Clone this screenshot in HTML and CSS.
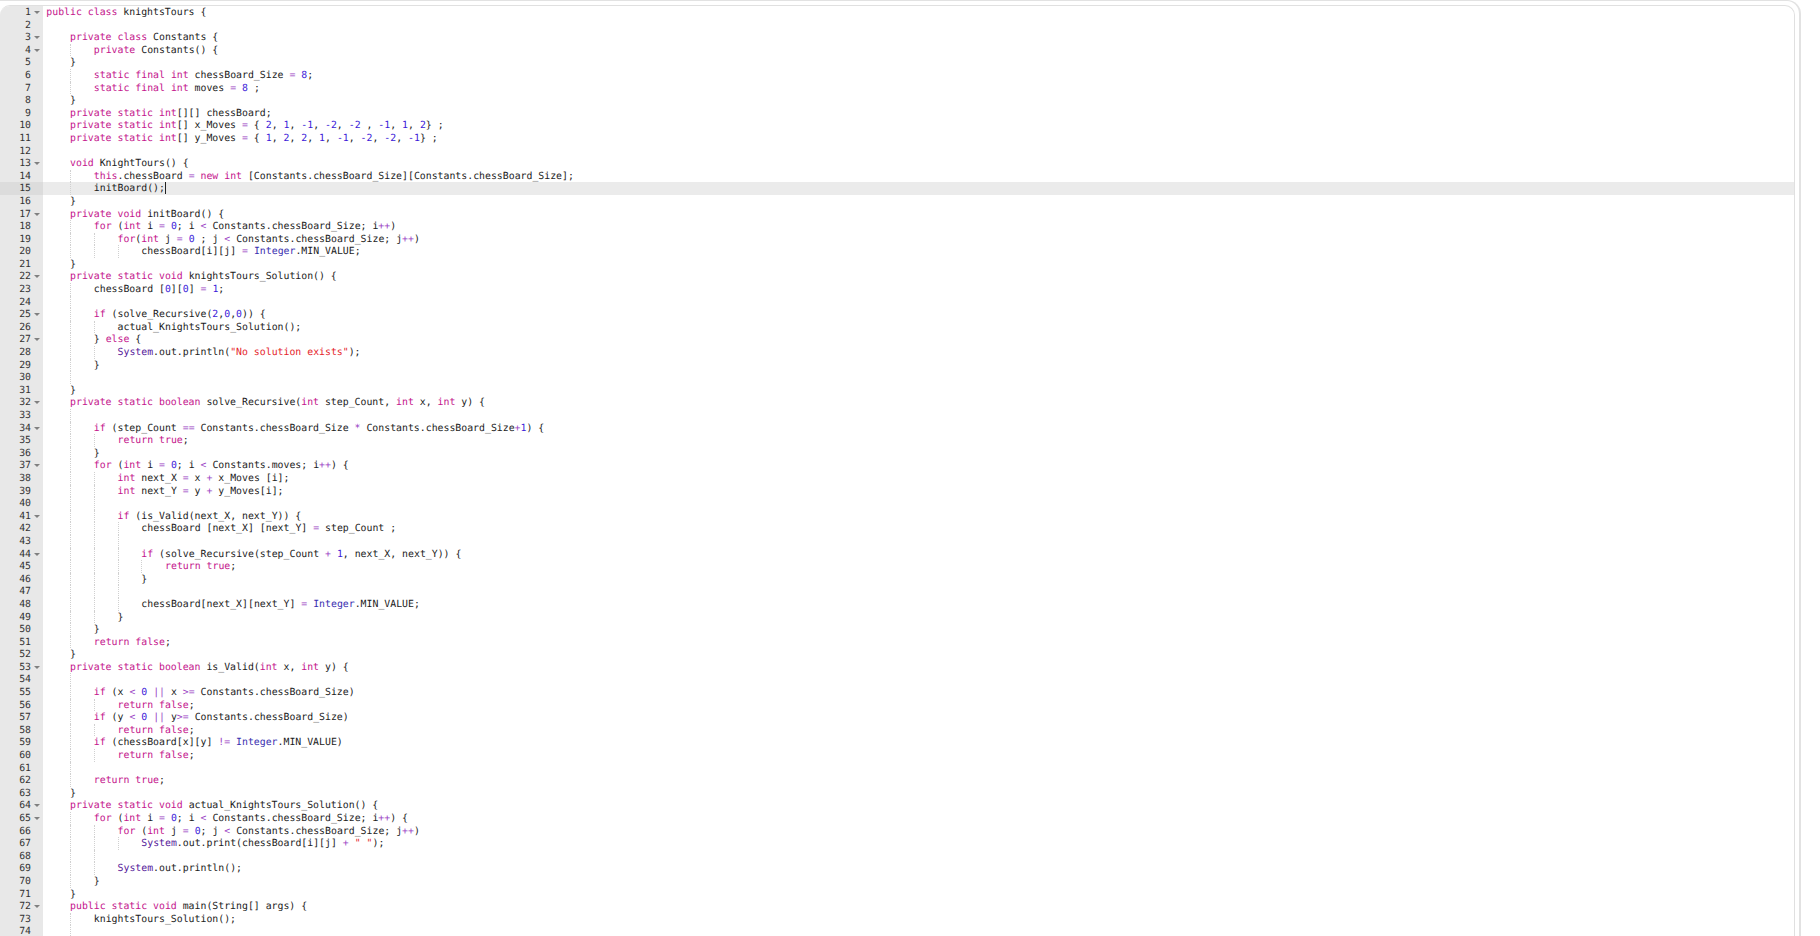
FILE: index.html
```html
<!DOCTYPE html>
<html lang="en">
<head>
<meta charset="utf-8">
<title>knightsTours</title>
<link rel="stylesheet" href="styles.css">
</head>
<body>
<div class="frame">
<div class="editor">
<div class="gutter">
<div class="num fold">1</div>
<div class="num">2</div>
<div class="num fold">3</div>
<div class="num fold">4</div>
<div class="num">5</div>
<div class="num">6</div>
<div class="num">7</div>
<div class="num">8</div>
<div class="num">9</div>
<div class="num">10</div>
<div class="num">11</div>
<div class="num">12</div>
<div class="num fold">13</div>
<div class="num">14</div>
<div class="num on">15</div>
<div class="num">16</div>
<div class="num fold">17</div>
<div class="num">18</div>
<div class="num">19</div>
<div class="num">20</div>
<div class="num">21</div>
<div class="num fold">22</div>
<div class="num">23</div>
<div class="num">24</div>
<div class="num fold">25</div>
<div class="num">26</div>
<div class="num fold">27</div>
<div class="num">28</div>
<div class="num">29</div>
<div class="num">30</div>
<div class="num">31</div>
<div class="num fold">32</div>
<div class="num">33</div>
<div class="num fold">34</div>
<div class="num">35</div>
<div class="num">36</div>
<div class="num fold">37</div>
<div class="num">38</div>
<div class="num">39</div>
<div class="num">40</div>
<div class="num fold">41</div>
<div class="num">42</div>
<div class="num">43</div>
<div class="num fold">44</div>
<div class="num">45</div>
<div class="num">46</div>
<div class="num">47</div>
<div class="num">48</div>
<div class="num">49</div>
<div class="num">50</div>
<div class="num">51</div>
<div class="num">52</div>
<div class="num fold">53</div>
<div class="num">54</div>
<div class="num">55</div>
<div class="num">56</div>
<div class="num">57</div>
<div class="num">58</div>
<div class="num">59</div>
<div class="num">60</div>
<div class="num">61</div>
<div class="num">62</div>
<div class="num">63</div>
<div class="num fold">64</div>
<div class="num fold">65</div>
<div class="num">66</div>
<div class="num">67</div>
<div class="num">68</div>
<div class="num">69</div>
<div class="num">70</div>
<div class="num">71</div>
<div class="num fold">72</div>
<div class="num">73</div>
<div class="num">74</div>
</div>
<div class="code">
<div class="row"><b>public</b> <b>class</b> knightsTours {</div>
<div class="row"></div>
<div class="row"><i class="g0"></i><b>private</b> <b>class</b> Constants {</div>
<div class="row"><i class="g0"></i><i class="g"></i><b>private</b> Constants() {</div>
<div class="row"><i class="g0"></i>}</div>
<div class="row"><i class="g0"></i><i class="g"></i><b>static</b> <b>final</b> <b>int</b> chessBoard_Size <u>=</u> <em>8</em>;</div>
<div class="row"><i class="g0"></i><i class="g"></i><b>static</b> <b>final</b> <b>int</b> moves <u>=</u> <em>8</em> ;</div>
<div class="row"><i class="g0"></i>}</div>
<div class="row"><i class="g0"></i><b>private</b> <b>static</b> <b>int</b>[][] chessBoard;</div>
<div class="row"><i class="g0"></i><b>private</b> <b>static</b> <b>int</b>[] x_Moves <u>=</u> { <em>2</em>, <em>1</em>, <em>-1</em>, <em>-2</em>, <em>-2</em> , <em>-1</em>, <em>1</em>, <em>2</em>} ;</div>
<div class="row"><i class="g0"></i><b>private</b> <b>static</b> <b>int</b>[] y_Moves <u>=</u> { <em>1</em>, <em>2</em>, <em>2</em>, <em>1</em>, <em>-1</em>, <em>-2</em>, <em>-2</em>, <em>-1</em>} ;</div>
<div class="row"></div>
<div class="row"><i class="g0"></i><b>void</b> KnightTours() {</div>
<div class="row"><i class="g0"></i><i class="g"></i><b>this</b>.chessBoard <u>=</u> <b>new</b> <b>int</b> [Constants.chessBoard_Size][Constants.chessBoard_Size];</div>
<div class="row on"><i class="g0"></i><i class="g"></i>initBoard();<span class="caret"></span></div>
<div class="row"><i class="g0"></i>}</div>
<div class="row"><i class="g0"></i><b>private</b> <b>void</b> initBoard() {</div>
<div class="row"><i class="g0"></i><i class="g"></i><b>for</b> (<b>int</b> i <u>=</u> <em>0</em>; i <u>&lt;</u> Constants.chessBoard_Size; i<u>++</u>)</div>
<div class="row"><i class="g0"></i><i class="g"></i><i class="g"></i><b>for</b>(<b>int</b> j <u>=</u> <em>0</em> ; j <u>&lt;</u> Constants.chessBoard_Size; j<u>++</u>)</div>
<div class="row"><i class="g0"></i><i class="g"></i><i class="g"></i><i class="g"></i>chessBoard[i][j] <u>=</u> <span class="type">Integer</span>.MIN_VALUE;</div>
<div class="row"><i class="g0"></i>}</div>
<div class="row"><i class="g0"></i><b>private</b> <b>static</b> <b>void</b> knightsTours_Solution() {</div>
<div class="row"><i class="g0"></i><i class="g"></i>chessBoard [<em>0</em>][<em>0</em>] <u>=</u> <em>1</em>;</div>
<div class="row"><i class="g0"></i><i class="g"></i></div>
<div class="row"><i class="g0"></i><i class="g"></i><b>if</b> (solve_Recursive(<em>2</em>,<em>0</em>,<em>0</em>)) {</div>
<div class="row"><i class="g0"></i><i class="g"></i><i class="g"></i>actual_KnightsTours_Solution();</div>
<div class="row"><i class="g0"></i><i class="g"></i>} <b>else</b> {</div>
<div class="row"><i class="g0"></i><i class="g"></i><i class="g"></i><span class="sys">System</span>.out.println(<span class="str">"No solution exists"</span>);</div>
<div class="row"><i class="g0"></i><i class="g"></i>}</div>
<div class="row"><i class="g0"></i><i class="g"></i></div>
<div class="row"><i class="g0"></i>}</div>
<div class="row"><i class="g0"></i><b>private</b> <b>static</b> <b>boolean</b> solve_Recursive(<b>int</b> step_Count, <b>int</b> x, <b>int</b> y) {</div>
<div class="row"><i class="g0"></i><i class="g"></i></div>
<div class="row"><i class="g0"></i><i class="g"></i><b>if</b> (step_Count <u>==</u> Constants.chessBoard_Size <u>*</u> Constants.chessBoard_Size<u>+</u><em>1</em>) {</div>
<div class="row"><i class="g0"></i><i class="g"></i><i class="g"></i><b>return</b> <b>true</b>;</div>
<div class="row"><i class="g0"></i><i class="g"></i>}</div>
<div class="row"><i class="g0"></i><i class="g"></i><b>for</b> (<b>int</b> i <u>=</u> <em>0</em>; i <u>&lt;</u> Constants.moves; i<u>++</u>) {</div>
<div class="row"><i class="g0"></i><i class="g"></i><i class="g"></i><b>int</b> next_X <u>=</u> x <u>+</u> x_Moves [i];</div>
<div class="row"><i class="g0"></i><i class="g"></i><i class="g"></i><b>int</b> next_Y <u>=</u> y <u>+</u> y_Moves[i];</div>
<div class="row"><i class="g0"></i><i class="g"></i><i class="g"></i></div>
<div class="row"><i class="g0"></i><i class="g"></i><i class="g"></i><b>if</b> (is_Valid(next_X, next_Y)) {</div>
<div class="row"><i class="g0"></i><i class="g"></i><i class="g"></i><i class="g"></i>chessBoard [next_X] [next_Y] <u>=</u> step_Count ;</div>
<div class="row"><i class="g0"></i><i class="g"></i><i class="g"></i><i class="g"></i></div>
<div class="row"><i class="g0"></i><i class="g"></i><i class="g"></i><i class="g"></i><b>if</b> (solve_Recursive(step_Count <u>+</u> <em>1</em>, next_X, next_Y)) {</div>
<div class="row"><i class="g0"></i><i class="g"></i><i class="g"></i><i class="g"></i><i class="g"></i><b>return</b> <b>true</b>;</div>
<div class="row"><i class="g0"></i><i class="g"></i><i class="g"></i><i class="g"></i>}</div>
<div class="row"><i class="g0"></i><i class="g"></i><i class="g"></i><i class="g"></i></div>
<div class="row"><i class="g0"></i><i class="g"></i><i class="g"></i><i class="g"></i>chessBoard[next_X][next_Y] <u>=</u> <span class="type">Integer</span>.MIN_VALUE;</div>
<div class="row"><i class="g0"></i><i class="g"></i><i class="g"></i>}</div>
<div class="row"><i class="g0"></i><i class="g"></i>}</div>
<div class="row"><i class="g0"></i><i class="g"></i><b>return</b> <b>false</b>;</div>
<div class="row"><i class="g0"></i>}</div>
<div class="row"><i class="g0"></i><b>private</b> <b>static</b> <b>boolean</b> is_Valid(<b>int</b> x, <b>int</b> y) {</div>
<div class="row"><i class="g0"></i><i class="g"></i></div>
<div class="row"><i class="g0"></i><i class="g"></i><b>if</b> (x <u>&lt;</u> <em>0</em> <u>||</u> x <u>&gt;=</u> Constants.chessBoard_Size)</div>
<div class="row"><i class="g0"></i><i class="g"></i><i class="g"></i><b>return</b> <b>false</b>;</div>
<div class="row"><i class="g0"></i><i class="g"></i><b>if</b> (y <u>&lt;</u> <em>0</em> <u>||</u> y<u>&gt;=</u> Constants.chessBoard_Size)</div>
<div class="row"><i class="g0"></i><i class="g"></i><i class="g"></i><b>return</b> <b>false</b>;</div>
<div class="row"><i class="g0"></i><i class="g"></i><b>if</b> (chessBoard[x][y] <u>!=</u> <span class="type">Integer</span>.MIN_VALUE)</div>
<div class="row"><i class="g0"></i><i class="g"></i><i class="g"></i><b>return</b> <b>false</b>;</div>
<div class="row"><i class="g0"></i><i class="g"></i></div>
<div class="row"><i class="g0"></i><i class="g"></i><b>return</b> <b>true</b>;</div>
<div class="row"><i class="g0"></i>}</div>
<div class="row"><i class="g0"></i><b>private</b> <b>static</b> <b>void</b> actual_KnightsTours_Solution() {</div>
<div class="row"><i class="g0"></i><i class="g"></i><b>for</b> (<b>int</b> i <u>=</u> <em>0</em>; i <u>&lt;</u> Constants.chessBoard_Size; i<u>++</u>) {</div>
<div class="row"><i class="g0"></i><i class="g"></i><i class="g"></i><b>for</b> (<b>int</b> j <u>=</u> <em>0</em>; j <u>&lt;</u> Constants.chessBoard_Size; j<u>++</u>)</div>
<div class="row"><i class="g0"></i><i class="g"></i><i class="g"></i><i class="g"></i><span class="sys">System</span>.out.print(chessBoard[i][j] <u>+</u> <span class="str">" "</span>);</div>
<div class="row"><i class="g0"></i><i class="g"></i><i class="g"></i></div>
<div class="row"><i class="g0"></i><i class="g"></i><i class="g"></i><span class="sys">System</span>.out.println();</div>
<div class="row"><i class="g0"></i><i class="g"></i>}</div>
<div class="row"><i class="g0"></i>}</div>
<div class="row"><i class="g0"></i><b>public</b> <b>static</b> <b>void</b> main(String[] args) {</div>
<div class="row"><i class="g0"></i><i class="g"></i>knightsTours_Solution();</div>
<div class="row"><i class="g0"></i><i class="g"></i></div>
</div>
</div>
</div>
</body>
</html>
```
FILE: styles.css
```css
html, body { margin: 0; height: 100%; overflow: hidden; background: #fff; }
.frame {
  box-sizing: border-box; width: 1801px; height: 960px;
  border-top: 1px solid #e2e2e2; border-right: 2px solid #e2e2e2;
  border-top-right-radius: 14px; padding: 4px 4px 0 0;
}
.editor {
  box-sizing: border-box; height: 100%; display: flex;
  border-top: 1px solid #e0e0e0; border-right: 1px solid #e0e0e0;
  border-radius: 10px 10px 0 0; overflow: hidden;
  font-family: "DejaVu Sans Mono", monospace; font-size: 9.86px;
  text-rendering: geometricPrecision; color: #1c1c1c;
}
.gutter { width: 43px; flex: none; background: #e8e8e8; color: #333; }
.num { height: 12.6px; line-height: 14px; text-align: right; padding-right: 12px; position: relative; }
.num.on { background: #dcdcdc; }
.num.fold::after {
  content: ""; position: absolute; right: 3px; top: 5px;
  border: 3px solid transparent; border-top-color: #808080; border-bottom: 0;
}
.code { flex: 1; }
.row { height: 12.6px; line-height: 14px; white-space: pre; padding-left: 3.3px; }
.row.on { background: #ebebeb; }
.g0, .g { display: inline-block; width: 23.76px; height: 12.6px; vertical-align: top; box-sizing: border-box; }
.g { border-left: 1px dotted #d0d0d0; }
.caret { display: inline-block; width: 1px; height: 12px; background: #222; vertical-align: top; }
b { font-weight: normal; color: #c4148c; }
em { font-style: normal; color: #3a19d8; }
u { text-decoration: none; color: #9a3fc4; }
.str { color: #e51d2a; }
.sys { color: #55189a; }
.type { color: #3a2fb0; }
```
